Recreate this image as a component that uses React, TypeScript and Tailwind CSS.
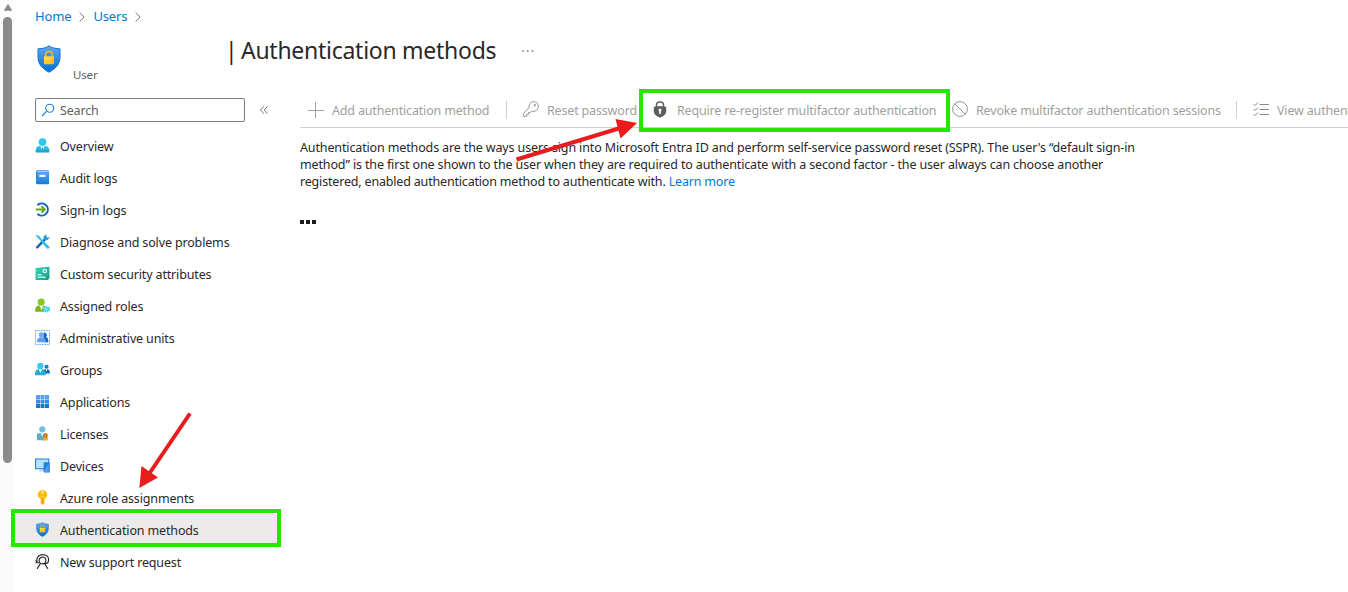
import type { ReactNode } from "react";
import clsx from "clsx";

type NavItem = {
  label: string;
  icon: ReactNode;
};

function Shield({ className }: { className?: string }) {
  return (
    <svg viewBox="0 0 24 28" className={className}>
      <defs>
        <linearGradient id="shield" x1="0" y1="0" x2="0" y2="1">
          <stop offset="0" stopColor="#62a8f2" />
          <stop offset="1" stopColor="#0070d0" />
        </linearGradient>
        <linearGradient id="lock" x1="0" y1="0" x2="1" y2="1">
          <stop offset="0" stopColor="#ffe452" />
          <stop offset="1" stopColor="#fbb600" />
        </linearGradient>
      </defs>
      <path
        d="M12 .8c3 2.500 7 2.700 11 3v8.700c0 7-5 11.500-11 14.700C6 24 1 19.500 1 12.500V3.800c4-.3 8-.5 11-3z"
        fill="url(#shield)"
        stroke="#1678ce"
        strokeWidth="1"
      />
      <path
        d="M8.700 11.500V9.800a3.300 3.300 0 0 1 6.600 0v1.700"
        fill="none"
        stroke="#f5bd17"
        strokeWidth="1.500"
      />
      <rect x="7" y="11.200" width="10" height="8" rx=".7" fill="url(#lock)" />
    </svg>
  );
}

const navIcon = "mb-px size-[15px] shrink-0";
const commandIcon = "mb-0.5 size-4 shrink-0";

const UserIcon = (
  <svg viewBox="0 0 16 16" className={navIcon}>
    <defs>
      <linearGradient id="user" x1="0" y1="0" x2="0" y2="1">
        <stop offset="0" stopColor="#32d4f5" />
        <stop offset="1" stopColor="#1999c0" />
      </linearGradient>
    </defs>
    <path
      d="M.7 15.500v-2c0-3.200 1.900-5.300 4.700-5.300h5.200c2.800 0 4.700 2.100 4.700 5.300v2z"
      fill="url(#user)"
    />
    <path d="M5.800 8.200h4.400L8 14z" fill="#fff" />
    <path d="M8 9l.9 3.500L8 14l-.9-1.500z" fill="#1ea6cc" />
    <circle cx="8" cy="4.300" r="4.100" fill="#30c8e9" />
  </svg>
);

const BookIcon = (
  <svg viewBox="0 0 16 16" className={navIcon}>
    <defs>
      <linearGradient id="book" x1="0" y1="0" x2="0" y2="1">
        <stop offset="0" stopColor="#58a9ef" />
        <stop offset="1" stopColor="#167bd7" />
      </linearGradient>
    </defs>
    <path d="M2.200.3h12.100v15H2.800c-1 0-1.600-.7-1.600-1.500V1.500z" fill="#1679ce" />
    <path d="M2.500.8h11.500v2H2.500z" fill="#b5dcf9" />
    <rect x="2.500" y="1.800" width="12.500" height="13" rx=".5" fill="url(#book)" />
    <rect x="4.700" y="5" width="6.500" height="2.400" rx=".3" fill="#fff" />
  </svg>
);

const SignInIcon = (
  <svg viewBox="0 0 16 16" className={navIcon} fill="none">
    <path
      d="M3.300 2.800A6.500 6.500 0 1 1 3.300 13.200"
      stroke="#0b62c4"
      strokeWidth="2.100"
      strokeLinecap="round"
    />
    <path d="M.8 8h9.500M7 4.500 10.500 8 7 11.500" stroke="#6aa51c" strokeWidth="2" />
  </svg>
);

const ToolsIcon = (
  <svg viewBox="0 0 16 16" className={navIcon} fill="none">
    <path d="M2.300 14.200 12 4.200" stroke="#1b63a5" strokeWidth="2.600" strokeLinecap="round" />
    <path
      d="M12.800.6a3.800 3.800 0 0 0-3.600 5.200 3.800 3.800 0 0 0 6.300-2.500l-2.600 1-1.300-1.200z"
      fill="#1fa0dc"
    />
    <path d="M.8 2 2 .8l4 2.700L5 5z" fill="#29bde8" />
    <path d="M3 2.800 8.500 8.500" stroke="#2abfe9" strokeWidth="2" />
    <path d="M9 9.200 13.800 14.200" stroke="#2abfe9" strokeWidth="3" strokeLinecap="round" />
  </svg>
);

const AttributesIcon = (
  <svg viewBox="0 0 16 16" className={navIcon}>
    <defs>
      <linearGradient id="attr" x1="0" y1="0" x2="1" y2="1">
        <stop offset="0" stopColor="#3bd6b7" />
        <stop offset="1" stopColor="#139985" />
      </linearGradient>
    </defs>
    <path d="M.6 2.200 15.400.8v12.400l-1.700 1.700H.6z" fill="url(#attr)" />
    <circle cx="10.500" cy="5.300" r="1.800" fill="none" stroke="#dcfff6" strokeWidth="1.300" />
    <path d="M2.700 8.500H7v1.600H2.700zM2.700 11.200h8.600v1.600H2.700z" fill="#b5fbea" />
  </svg>
);

const RolesIcon = (
  <svg viewBox="0 0 16 16" className={navIcon}>
    <path
      d="M.2 14.600V13c0-2.900 1.700-4.900 4.300-4.900h4.300c2.500 0 4.200 2 4.200 4.900v1.600z"
      fill="#76b51c"
    />
    <path d="M4.800 8.100h4L6.800 13z" fill="#fff" />
    <circle cx="6.600" cy="4.200" r="3.800" fill="#86c91e" />
    <path d="m12.200 8.700 3.800 1.200v3.700l-3.800 2.200-3.700-2.200V9.900z" fill="#50d8f3" />
    <path d="M8.500 9.900 12.200 11.500v4.300" fill="none" stroke="#a7eefa" strokeWidth=".7" />
  </svg>
);

const UnitsIcon = (
  <svg viewBox="0 0 16 16" className={navIcon}>
    <rect
      x=".5"
      y=".5"
      width="15"
      height="15"
      fill="none"
      stroke="#5ba6e2"
      strokeDasharray="1.800 1"
    />
    <path d="M9 3.200a2.200 2.200 0 0 1 2.600 4C13.500 8 14.300 9.500 14.300 13H9z" fill="#1264c2" />
    <circle cx="6.800" cy="5" r="2.700" fill="#6cacf4" />
    <path d="M2 13c0-3.400 1.700-5.200 4.800-5.200s4.800 1.800 4.800 5.200z" fill="#609ff0" />
  </svg>
);

const GroupsIcon = (
  <svg viewBox="0 0 16 16" className={navIcon}>
    <circle cx="12.300" cy="5" r="2.200" fill="#1479dc" />
    <path d="M8.500 12.200V9.500c.7-1.400 1.900-2 3.700-2 2.600 0 3.800 1.700 3.800 4.700z" fill="#0865c8" />
    <path d="m11.200 7.500 1 3 1-3z" fill="#fff" />
    <path
      d="M0 14v-1.700c0-2.700 1.500-4.500 4-4.500h3.500c2.400 0 3.900 1.800 3.900 4.500V14z"
      fill="#24acd5"
    />
    <path d="M4 7.800h3.400l-1.700 4z" fill="#fff" />
    <circle cx="5.700" cy="4.200" r="3.400" fill="#35cceb" />
  </svg>
);

const AppsIcon = (
  <svg viewBox="0 0 15 15" className={navIcon}>
    <path d="M1 1h4v4H1zM5.500 1h4v4h-4zM10 1h4v4h-4z" fill="#5b9df1" />
    <path d="M1 5.500h4v4H1zM5.500 5.500h4v4h-4zM10 5.500h4v4h-4z" fill="#368aea" />
    <path d="M1 10h4v4H1zM5.500 10h4v4h-4zM10 10h4v4h-4z" fill="#1676d4" />
  </svg>
);

const LicensesIcon = (
  <svg viewBox="0 0 16 16" className={navIcon}>
    <path d="M2 15.200V9.500c0-1 .8-1.700 1.600-1.700h8.200c1 0 1.700.7 1.700 1.700v5.700z" fill="#5eadc9" />
    <path d="M6 7.800h4l-2 3.500z" fill="#fff" />
    <circle cx="7.800" cy="3.500" r="3.300" fill="#74bed9" />
    <path d="M8.800 11h4v4.900l-2-1.100-2 1.100z" fill="#f4ad24" />
    <circle cx="10.800" cy="10.300" r="2.300" fill="#cf621b" />
    <circle cx="10.800" cy="10.300" r=".9" fill="#f5a73a" />
  </svg>
);

const DevicesIcon = (
  <svg viewBox="0 0 16 16" className={navIcon}>
    <path d="M5 12h5v2.500H4z" fill="#b8daf3" />
    <rect x=".6" y="1.100" width="14" height="10.300" fill="#b3e4fb" stroke="#3386cf" strokeWidth="1.200" />
    <rect x="9.200" y="4.600" width="6.600" height="10.800" rx=".6" fill="#2380dc" />
    <path d="m10.200 13.500 4.500-8v9.400h-4.500z" fill="#529ce9" />
  </svg>
);

const KeyIcon = (
  <svg viewBox="0 0 16 16" className={navIcon}>
    <path
      d="M8 .3c3.100 0 5.100 2 5.100 4.600 0 2-1.100 3.500-2.900 4.300v5L8.100 16 6 14.200V9.200C4.100 8.400 2.900 6.900 2.900 4.900 2.900 2.300 4.900.3 8 .3z"
      fill="#ffb900"
    />
    <circle cx="8" cy="2.700" r="1.300" fill="#fff1b5" />
    <path d="M8.200 9.300v5" stroke="#f08b1d" strokeWidth=".8" />
    <path d="M5.700 6.800h4.800" stroke="#ffda4d" strokeWidth=".8" />
  </svg>
);

const SupportIcon = (
  <svg viewBox="0 0 16 16" className={navIcon} fill="none" stroke="#262524" strokeWidth="1.200">
    <circle cx="8" cy="6.800" r="3.600" />
    <path d="M2.200 15.800 5.500 10.800M13.800 15.800 10.500 10.800" />
    <path d="M2 9.300V6.300C2 2.900 4.700.6 8.300.6s6.200 2.300 6.200 5.500-1.700 4.300-3.800 4.300H8" />
    <path d="M1.300 6v3.300h2.800" />
  </svg>
);

const navItems: NavItem[] = [
  { label: "Overview", icon: UserIcon },
  { label: "Audit logs", icon: BookIcon },
  { label: "Sign-in logs", icon: SignInIcon },
  { label: "Diagnose and solve problems", icon: ToolsIcon },
  { label: "Custom security attributes", icon: AttributesIcon },
  { label: "Assigned roles", icon: RolesIcon },
  { label: "Administrative units", icon: UnitsIcon },
  { label: "Groups", icon: GroupsIcon },
  { label: "Applications", icon: AppsIcon },
  { label: "Licenses", icon: LicensesIcon },
  { label: "Devices", icon: DevicesIcon },
  { label: "Azure role assignments", icon: KeyIcon },
  { label: "Authentication methods", icon: <Shield className={navIcon} /> },
  { label: "New support request", icon: SupportIcon },
];

function BreadcrumbChevron() {
  return (
    <svg viewBox="0 0 6 10" className="mt-0.5 h-2.5 w-1.5" fill="none" stroke="#7a7876">
      <path d="m.6.5 4.600 4.500L.6 9.500" />
    </svg>
  );
}

function Scrollbar() {
  return (
    <div className="flex w-[15px] shrink-0 flex-col items-center bg-[#fbfbfb] pt-1">
      <svg viewBox="0 0 8 7" className="h-[7px] w-2">
        <path d="M4 .3 7.800 6.500H.2z" fill="#8a8a8a" stroke="#8a8a8a" strokeWidth=".6" />
      </svg>
      <div className="mt-1.5 h-[446px] w-[9px] rounded-full bg-[#8b8b8b]" />
    </div>
  );
}

function Sidebar() {
  return (
    <nav className="w-[285px] shrink-0">
      <div className="flex h-8 items-center pl-5">
        <div className="flex h-6 w-[210px] items-center rounded-xs border border-[#7d7b79] pl-[5px]">
          <svg viewBox="0 0 14 14" className="mb-px size-3.5" fill="none" stroke="#1a80d6" strokeWidth="1.100">
            <circle cx="8.700" cy="5.200" r="4" />
            <path d="M5.800 8.200 1 13" />
          </svg>
          <span className="ml-[5px] pt-0.5 text-[#605e5c]">Search</span>
        </div>
        <svg viewBox="0 0 8 8" className="ml-[15px] size-2" fill="none" stroke="#666462" strokeWidth=".9">
          <path d="M3.700.3.500 4l3.200 3.700M7.500.3 4.300 4l3.200 3.700" />
        </svg>
      </div>
      <ul className="mt-1">
        {navItems.map((item) => (
          <li
            key={item.label}
            className={clsx(
              "flex h-8 w-[265px] items-center pl-5",
              item.label === "Authentication methods" && "bg-[#edebe9]",
            )}
          >
            {item.icon}
            <span className="ml-[10px] pt-0.5 whitespace-nowrap">{item.label}</span>
          </li>
        ))}
      </ul>
    </nav>
  );
}

function Toolbar() {
  return (
    <div className="flex h-[34px] items-center overflow-hidden border-b border-[#d2d0ce] pl-2 tracking-[-0.17px] whitespace-nowrap text-[#a19f9d]">
      <svg viewBox="0 0 16 16" className={commandIcon} fill="none" stroke="#a19f9d">
        <path d="M7.500 0v16M0 8.500h16" />
      </svg>
      <span className="ml-2 w-[174px] shrink-0">Add authentication method</span>
      <div className="mb-0.5 h-[18px] w-px shrink-0 bg-[#d2d0ce]" />
      <svg viewBox="0 0 16 16" className="mb-1 ml-4 size-4 shrink-0" fill="none" stroke="#979593">
        <path d="M10.500.6a4.900 4.900 0 1 1-1.700 9.500L7.500 11.500H5.600v1.900H3.700v2H.6v-3.200l5.500-5.500A4.900 4.900 0 0 1 10.500.6z" />
        <circle cx="11.800" cy="4.200" r=".9" />
      </svg>
      <span className="ml-2 w-[105px] shrink-0">Reset password</span>
      <svg viewBox="0 0 16 17" className="mb-0.5 h-[17px] w-4 shrink-0">
        <path d="M4.500 6V4a3.500 3 0 0 1 7 0v2" fill="none" stroke="#605e5c" strokeWidth="1.500" />
        <path d="M1.800 5.800c2.200-.2 4.400-.4 6.200-.9 1.800.5 4 .7 6.200.9v4.200c0 3.300-2.700 5.100-6.200 6.700-3.500-1.600-6.200-3.400-6.200-6.700z" fill="#605e5c" />
        <circle cx="8" cy="8.900" r="1.500" fill="#fff" />
        <path d="M7.200 9h1.600v4H7.200z" fill="#fff" />
      </svg>
      <span className="ml-[9px] w-[274px] shrink-0">Require re-register multifactor authentication</span>
      <svg viewBox="0 0 16 16" className="mb-1 ml-px size-4 shrink-0" fill="none" stroke="#979593">
        <circle cx="8" cy="8" r="7.400" />
        <path d="m2.800 2.800 10.400 10.400" />
      </svg>
      <span className="ml-2 w-[260px] shrink-0">Revoke multifactor authentication sessions</span>
      <div className="mb-0.5 h-[18px] w-px shrink-0 bg-[#d2d0ce]" />
      <svg viewBox="0 0 16 16" className="mb-1 ml-4 size-4 shrink-0" fill="none" stroke="#8c8a88">
        <path d="M6.500 3.500H16M6.500 8.500H16M6.500 13.500H16" />
        <path d="m.5 3 1.500 1.500L5 1.500M.5 8 2 9.500l3-3M.5 13 2 14.500l3-3" />
      </svg>
      <span className="ml-2 shrink-0">View authentication methods</span>
    </div>
  );
}

function Content() {
  return (
    <main className="min-w-0 flex-1">
      <Toolbar />
      <div className="mt-[11px] leading-[17px] tracking-[-0.135px] whitespace-nowrap">
        <p>
          Authentication methods are the ways users sign into Microsoft Entra ID and perform
          self-service password reset (SSPR). The user's “default sign-in
        </p>
        <p>
          method” is the first one shown to the user when they are required to authenticate with a
          second factor - the user always can choose another
        </p>
        <p className="tracking-[-0.18px]">
          registered, enabled authentication method to authenticate with.{" "}
          <a className="text-[#0078d4]">Learn more</a>
        </p>
      </div>
      <div className="mt-[30px] flex gap-0.5">
        <div className="size-1 bg-[#1b1a19]" />
        <div className="size-1 bg-[#1b1a19]" />
        <div className="size-1 bg-[#1b1a19]" />
      </div>
    </main>
  );
}

// Highlight boxes and arrows that sit over the page
function Annotations() {
  return (
    <>
      <div className="absolute top-[89px] left-[639px] h-[43px] w-[311px] border-4 border-[#28e600]" />
      <div className="absolute top-[509px] left-[11px] h-[38px] w-[270px] border-4 border-[#28e600]" />
      <svg viewBox="0 0 1348 592" className="absolute inset-0 h-full w-full" fill="#e91c1c">
        <path d="M516.500 159.500 622 127.500M190 413.500 149 474" stroke="#e91c1c" strokeWidth="4" />
        <path d="m615.500 119 21.500 4-16.500 15.500zM141.500 466l16.500 11.500-18.700 10.500z" />
      </svg>
    </>
  );
}

export default function App() {
  return (
    <div className="relative flex h-[592px] w-[1348px] overflow-hidden bg-white font-['Noto_Sans',sans-serif] text-[12.5px] leading-4 tracking-[-0.15px] text-[#292827]">
      <Scrollbar />
      <div className="flex min-w-0 flex-1 flex-col">
        <header className="h-[94px] shrink-0 pl-5">
          <div className="flex h-8 items-center gap-2 text-[13px] text-[#0078d4]">
            <span>Home</span>
            <BreadcrumbChevron />
            <span>Users</span>
            <BreadcrumbChevron />
          </div>
          <div className="flex pt-0.5">
            <Shield className="mt-[11px] ml-0.5 h-7 w-6 shrink-0" />
            <span className="mt-[33px] ml-3 w-6 text-[11.5px] text-[#605e5c]">User</span>
            <h1 className="ml-[131px] flex h-8 w-[271px] items-center text-[23px] tracking-[-0.27px] whitespace-pre">
              <span className="-ml-[3px] w-4">|</span>Authentication methods
            </h1>
            <svg viewBox="0 0 12 2" className="mt-4 ml-[23px] h-0.5 w-3" fill="#706e6c">
              <path d="M.3.3h1.500v1.500H.3zM5 .3h1.500v1.500H5zM9.800.3h1.500v1.500H9.800z" />
            </svg>
          </div>
        </header>
        <div className="flex min-h-0 flex-1">
          <Sidebar />
          <Content />
        </div>
      </div>
      <Annotations />
    </div>
  );
}
